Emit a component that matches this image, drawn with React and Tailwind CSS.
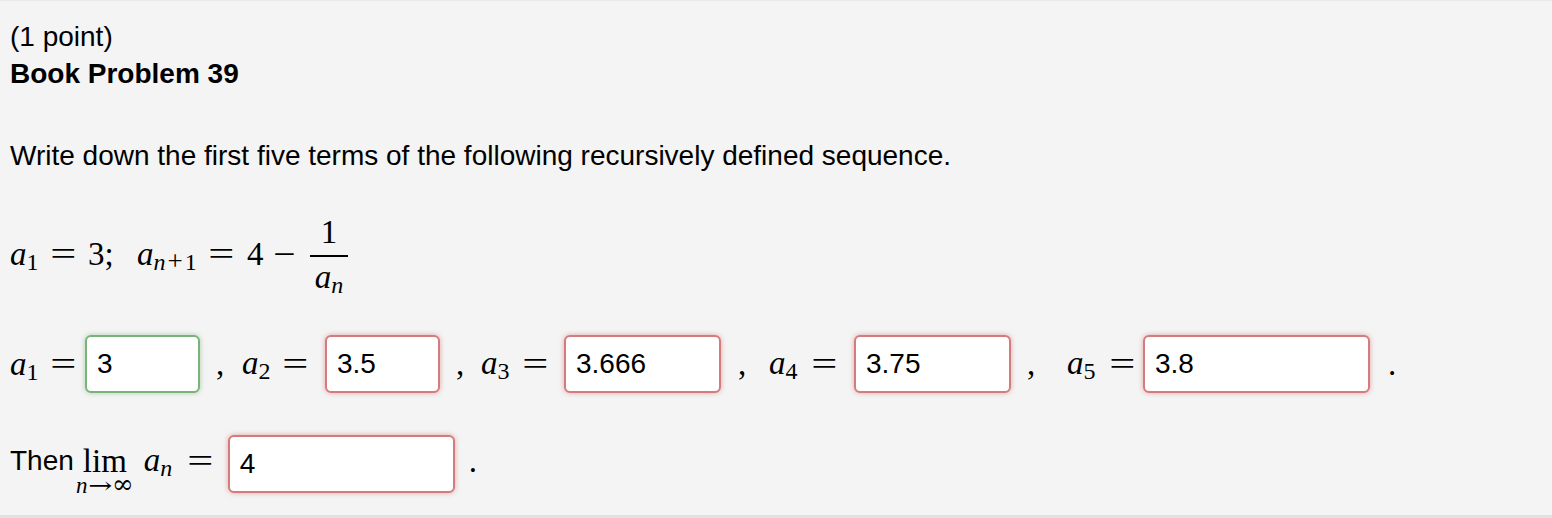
import React from "react";

const M = "font-['Liberation_Serif','DejaVu_Serif',serif]";

function V({ sub, w }) {
  return (
    <span className={`${M} inline-flex items-baseline leading-none shrink-0 ${w}`}>
      <span className="italic text-[33px] leading-none">a</span>
      <span className="text-[24px] leading-none relative top-[5px]">
        {sub}
      </span>
    </span>
  );
}

function Eq({ className = "", w = "w-[23px]" }) {
  return (
    <span className={`${M} inline-flex justify-center shrink-0 text-[33px] leading-none ${w} ${className}`}>
      <span className="inline-block scale-x-[1.4]">=</span>
    </span>
  );
}

function Box({ value, w, ok, className = "" }) {
  return (
    <div
      className={`h-[58px] shrink-0 ${w} rounded-[6px] border-2 bg-white flex items-center pl-[10px] text-[28px] leading-none font-['Liberation_Sans',Arial,sans-serif] text-black ${
        ok
          ? "border-[#7ab27a] shadow-[0_0_5px_rgba(100,170,100,0.5)]"
          : "border-[#d47b7b] shadow-[0_0_5px_rgba(210,90,90,0.5)]"
      } ${className}`}
    >
      {value}
    </div>
  );
}

function Punct({ c, className = "" }) {
  return (
    <span className={`${M} text-[33px] leading-none shrink-0 w-[6px] ${className}`}>{c}</span>
  );
}

export default function App() {
  return (
    <div className="w-[1552px] h-[518px] bg-[#f4f4f4] border-t border-t-[#eaeaea] border-b-[3px] border-b-[#e2e2e2] text-black font-['Liberation_Sans',Arial,sans-serif] overflow-hidden">
      <div className="pl-[10px] pt-[20px]">
        <div className="text-[28px] leading-[32px]">(1 point)</div>
        <div className="text-[28px] leading-[32px] font-bold mt-[5px]">Book Problem 39</div>
        <div className="text-[28px] leading-[32px] mt-[50px]">
          Write down the first five terms of the following recursively defined sequence.
        </div>

        <div className="flex items-center h-[90px] mt-[37px]">
          <V sub="1" w="w-[27px]" />
          <Eq className="ml-[15px]" />
          <span className={`${M} text-[33px] leading-none ml-[13px] w-[25px] shrink-0`}>3;</span>
          <span className={`${M} inline-flex items-baseline leading-none ml-[24px] w-[61px] shrink-0`}>
            <span className="italic text-[33px] leading-none">a</span>
            <span className="text-[24px] leading-none relative top-[5px] whitespace-nowrap">
              <span className="italic">n</span>
              <span className="text-[27px] mx-[2px]">+</span>1
            </span>
          </span>
          <Eq className="ml-[12px]" />
          <span className={`${M} text-[33px] leading-none ml-[14px] w-[16px] shrink-0`}>4</span>
          <span className={`${M} inline-flex justify-center text-[33px] leading-none ml-[10px] w-[22px] shrink-0`}>
            <span className="inline-block scale-x-[1.2]">−</span>
          </span>
          <span className="inline-flex flex-col items-center ml-[15px] w-[38px] shrink-0 relative top-[1px]">
            <span className={`${M} text-[33px] leading-[33px]`}>1</span>
            <span className="h-[2px] w-[38px] bg-black mt-[6px] mb-[4px]"></span>
            <span className={`${M} inline-flex items-baseline leading-none`}>
              <span className="italic text-[33px] leading-none">a</span>
              <span className="italic text-[24px] leading-none relative top-[5px]">n</span>
            </span>
          </span>
        </div>

        <div className="flex items-center h-[58px] mt-[36px]">
          <V sub="1" w="w-[27px]" />
          <Eq className="ml-[15px]" />
          <Box value="3" w="w-[115px]" ok className="ml-[10px]" />
          <Punct c="," className="ml-[16px]" />
          <span className="ml-[20px]"><V sub="2" w="w-[28px]" /></span>
          <Eq className="ml-[13px]" w="w-[24px]" />
          <Box value="3.5" w="w-[115px]" className="ml-[18px]" />
          <Punct c="," className="ml-[16px]" />
          <span className="ml-[19px]"><V sub="3" w="w-[32px]" /></span>
          <Eq className="ml-[10px]" w="w-[24px]" />
          <Box value="3.666" w="w-[157px]" className="ml-[17px]" />
          <Punct c="," className="ml-[17px]" />
          <span className="ml-[25px]"><V sub="4" w="w-[30px]" /></span>
          <Eq className="ml-[14px]" />
          <Box value="3.75" w="w-[157px]" className="ml-[18px]" />
          <Punct c="," className="ml-[16px]" />
          <span className="ml-[34px]"><V sub="5" w="w-[30px]" /></span>
          <Eq className="ml-[13px]" w="w-[24px]" />
          <Box value="3.8" w="w-[227px]" className="ml-[9px]" />
          <Punct c="." className="ml-[18px]" />
        </div>

        <div className="flex items-center h-[58px] mt-[39px]">
          <span className="text-[28px] leading-[32px] shrink-0">Then</span>
          <span className={`${M} inline-flex flex-col items-center ml-[0px] w-[62px] shrink-0 relative top-[10px]`}>
            <span className="text-[33px] leading-[26px]">lim</span>
            <span className="text-[23px] leading-[18px] mt-[1px] whitespace-nowrap">
              <span className="italic">n</span>
              <span className="inline-block font-['DejaVu_Serif',serif] text-[22px] scale-x-[1.3] mx-[3px]">→</span>
              <span className="font-['DejaVu_Serif',serif] text-[26px]">∞</span>
            </span>
          </span>
          <span className="ml-[8px]">
            <span className={`${M} inline-flex items-baseline leading-none w-[31px]`}>
              <span className="italic text-[33px] leading-none">a</span>
              <span className="italic text-[24px] leading-none relative top-[5px]">n</span>
            </span>
          </span>
          <Eq className="ml-[13px]" w="w-[25px]" />
          <Box value="4" w="w-[227px]" className="ml-[15px] relative top-[3px]" />
          <Punct c="." className="ml-[14px]" />
        </div>
      </div>
    </div>
  );
}
